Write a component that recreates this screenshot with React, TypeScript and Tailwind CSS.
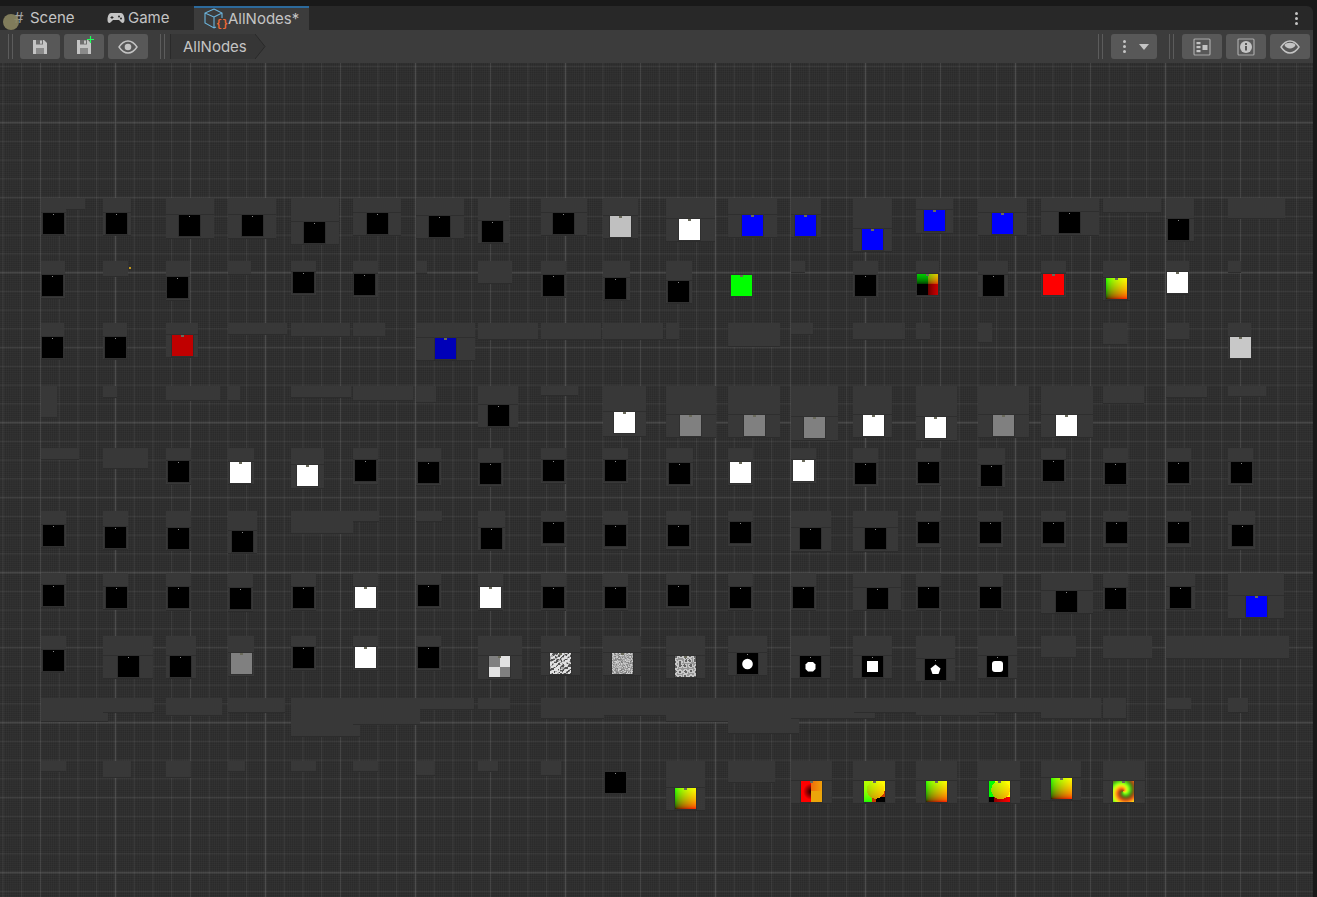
import React from "react";

type N = [number, number, number, number?, number?, string?];
const FONT = { fontFamily: "Inter, 'Liberation Sans', sans-serif" };

const rows: [number, N[]][] = [
  [198, [
    [41, 44, 11], [41, 25, 37, 43, 213, "#000"], [103, 28, 36, 106, 213, "#000"], [166, 48, 40, 179, 215, "#000"], [228, 48, 40, 242, 215, "#000"],
    [291, 48, 45, 304, 222, "#000"], [353, 48, 36, 367, 213, "#000"], [416, 48, 40, 429, 216, "#000"], [478, 31, 45, 482, 221, "#000"], [541, 46, 37, 553, 213, "#000"],
    [603, 35, 39, 610, 216, "#c0c0c0"], [666, 49, 42, 679, 219, "#fff"], [728, 49, 39, 742, 215, "#0000ff"], [791, 30, 39, 795, 215, "#0000ff"], [853, 39, 51, 862, 229, "#0000ff"],
    [916, 37, 35, 924, 210, "#0000ff"], [978, 49, 37, 992, 213, "#0000ff"], [1041, 58, 37, 1059, 212, "#000"], [1103, 58, 14], [1166, 28, 43, 1168, 219, "#000"], [1228, 57, 20],
  ]],
  [261, [
    [41, 24, 37, 42, 275, "#000"], [103, 25, 15], [166, 24, 39, 167, 277, "#000"], [228, 23, 13], [291, 25, 34, 293, 272, "#000"], [353, 25, 36, 354, 274, "#000"],
    [416, 11, 12], [478, 34, 22], [541, 25, 36, 543, 275, "#000"], [603, 27, 39, 605, 278, "#000"], [666, 26, 42, 668, 281, "#000"], [731, 21, 21, 731, 275, "#00ff00"],
    [791, 14, 11], [853, 25, 36, 855, 275, "#000"], [916, 23, 36, 917, 274, "quad"], [978, 30, 36, 983, 275, "#000"], [1041, 25, 36, 1043, 274, "#ff0000"],
    [1103, 27, 38, 1106, 278, "uv"], [1166, 23, 33, 1167, 272, "#fff"], [1228, 13, 11],
  ]],
  [323, [
    [41, 23, 36, 42, 337, "#000"], [103, 24, 36, 105, 337, "#000"], [166, 32, 33, 172, 335, "#c00000"], [228, 59, 11], [291, 59, 13], [353, 32, 13],
    [416, 59, 36, 435, 338, "#0000b8"], [478, 60, 16], [541, 60, 16], [603, 60, 16], [666, 13, 16], [728, 52, 23], [791, 22, 11], [853, 52, 16], [916, 14, 16],
    [978, 14, 19], [1103, 24, 21], [1166, 23, 16], [1228, 23, 36, 1230, 337, "#c8c8c8"],
  ]],
  [386, [
    [41, 16, 31], [103, 14, 11], [166, 54, 14], [228, 12, 14], [291, 60, 11], [353, 60, 14], [416, 20, 16], [478, 40, 41, 488, 405, "#000"], [541, 37, 9],
    [603, 43, 50, 614, 412, "#fff"], [666, 50, 51, 680, 415, "#808080"], [728, 52, 51, 744, 415, "#808080"], [791, 47, 54, 804, 417, "#808080"], [853, 39, 51, 863, 415, "#fff"],
    [916, 41, 54, 925, 417, "#fff"], [978, 51, 51, 993, 415, "#808080"], [1041, 52, 51, 1056, 415, "#fff"], [1103, 41, 17], [1166, 41, 11], [1228, 38, 10],
  ]],
  [448, [
    [41, 38, 11], [103, 45, 20], [166, 25, 36, 168, 461, "#000"], [228, 26, 36, 230, 462, "#fff"], [291, 33, 40, 297, 465, "#fff"], [353, 25, 36, 355, 460, "#000"],
    [416, 25, 37, 418, 462, "#000"], [478, 25, 38, 480, 463, "#000"], [541, 25, 35, 543, 460, "#000"], [603, 25, 35, 605, 460, "#000"], [666, 27, 38, 669, 463, "#000"],
    [728, 25, 37, 730, 462, "#fff"], [791, 25, 35, 793, 460, "#fff"], [853, 25, 38, 855, 463, "#000"], [916, 25, 37, 918, 462, "#000"], [978, 27, 39, 981, 465, "#000"],
    [1041, 25, 34, 1043, 460, "#000"], [1103, 25, 37, 1105, 463, "#000"], [1166, 25, 37, 1168, 462, "#000"], [1228, 25, 37, 1231, 462, "#000"],
  ]],
  [511, [
    [41, 25, 36, 43, 525, "#000"], [103, 25, 38, 105, 527, "#000"], [166, 25, 38, 168, 528, "#000"], [228, 29, 42, 232, 531, "#000"], [291, 62, 22], [353, 26, 10], [416, 26, 10],
    [478, 27, 39, 481, 528, "#000"], [541, 25, 35, 543, 522, "#000"], [603, 25, 38, 605, 525, "#000"], [666, 25, 38, 668, 525, "#000"], [728, 25, 35, 730, 522, "#000"],
    [791, 40, 40, 800, 528, "#000"], [853, 45, 40, 865, 528, "#000"], [916, 25, 36, 918, 522, "#000"], [978, 25, 36, 980, 522, "#000"], [1041, 25, 36, 1043, 522, "#000"],
    [1103, 25, 36, 1106, 522, "#000"], [1166, 25, 36, 1168, 522, "#000"], [1228, 27, 38, 1232, 525, "#000"],
  ]],
  [573, [
    [41, 25, 34, 43, 585, "#000"], [103, 25, 36, 106, 587, "#000"], [166, 25, 37, 168, 587, "#000"], [228, 25, 38, 230, 588, "#000"], [291, 25, 37, 293, 587, "#000"],
    [353, 25, 37, 355, 587, "#fff"], [416, 25, 35, 418, 585, "#000"], [478, 25, 37, 480, 587, "#fff"], [541, 25, 37, 543, 587, "#000"], [603, 25, 37, 605, 587, "#000"],
    [666, 25, 35, 668, 585, "#000"], [728, 25, 37, 730, 587, "#000"], [791, 25, 37, 793, 587, "#000"], [853, 48, 37, 867, 588, "#000"], [916, 25, 37, 918, 587, "#000"],
    [978, 25, 37, 980, 587, "#000"], [1041, 52, 39, 1056, 591, "#000"], [1103, 25, 37, 1105, 588, "#000"], [1166, 29, 36, 1170, 587, "#000"], [1228, 56, 45, 1246, 596, "#0000ff"],
  ]],
  [636, [
    [41, 25, 36, 43, 650, "#000"], [103, 50, 41, 118, 656, "#000"], [166, 30, 41, 170, 656, "#000"], [228, 26, 40, 231, 653, "#808080"], [291, 25, 34, 293, 647, "#000"],
    [353, 25, 34, 355, 647, "#fff"], [416, 25, 34, 418, 647, "#000"], [478, 44, 43, 489, 656, "checker"], [541, 39, 39, 550, 653, "n1"], [603, 38, 39, 612, 653, "n2"],
    [666, 39, 42, 675, 656, "n3"], [728, 39, 39, 737, 653, "circle"], [791, 39, 42, 800, 656, "oct"], [853, 39, 41, 862, 656, "square"], [916, 39, 45, 925, 659, "pent"],
    [978, 39, 42, 987, 656, "round"], [1041, 35, 21], [1103, 49, 22], [1166, 123, 22],
  ]],
  [698, [
    [41, 67, 23], [103, 51, 14], [166, 56, 17], [228, 57, 14], [291, 69, 38], [353, 67, 26], [420, 54, 11], [478, 32, 11],
    [541, 63, 20], [604, 62, 17], [666, 62, 23], [728, 71, 35], [791, 84, 20], [854, 62, 14], [916, 79, 17], [979, 62, 14], [1041, 60, 20], [1103, 23, 20], [1166, 25, 11], [1228, 20, 14],
  ]],
  [761, [
    [41, 25, 10], [103, 28, 16], [166, 25, 16], [228, 17, 10], [291, 25, 10], [353, 25, 10], [416, 19, 14], [478, 20, 10], [541, 20, 14],
    [605, 21, 21, 605, 772, "#000"], [666, 39, 49, 675, 788, "uv"], [728, 47, 21], [791, 41, 42, 801, 781, "split"], [853, 42, 42, 864, 781, "polar"],
    [916, 41, 41, 926, 781, "uv"], [978, 42, 42, 989, 781, "polar2"], [1041, 40, 39, 1051, 778, "uv"], [1103, 42, 42, 1113, 781, "swirl"],
  ]],
];

function rnd(x: number, y: number, s: number) {
  const v = Math.sin(x * 12.9898 + y * 78.233 + s) * 43758.5453;
  return v - Math.floor(v);
}
const clamp = (n: number) => Math.max(0, Math.min(255, Math.round(n)));
const gam = (c: number) => 255 * Math.pow(Math.max(0, Math.min(1, c)), 0.45);

function pixel(kind: string, x: number, y: number): [number, number, number] {
  const u = (x + 0.5) / 21;
  const v = (y + 0.5) / 21;
  const uvc = (a: number, b: number): [number, number, number] => [gam(a), gam(b), 0];
  switch (kind) {
    case "uv":
      return uvc(u, 1 - v);
    case "quad": {
      const r = u > 0.5 ? 0.1 + (u - 0.5) * 1.0 : 0;
      const g = v < 0.5 ? 0.6 * (1 - v * 2) : 0;
      return [gam(r * (v < 0.5 ? 1.3 : 1)), gam(g), 0];
    }
    case "split": {
      if (u < 0.5) {
        const d = Math.hypot(u - 0.5, v - 0.5);
        return [255 * Math.min(1, d * 2.4 + 0.05), 0, 0];
      }
      return v < 0.5 ? [240, 110 + 100 * (u - 0.5), 10] : [235, 165, 10];
    }
    case "polar": {
      const d = Math.hypot(u - 0.55, v - 0.42);
      if (d < 0.42) return uvc(0.25 + u * 0.8, 1 - v * 0.75);
      if (v > 0.78 && u > 0.55) return [0, 0, 0];
      if (u < 0.4) return [gam(0.5 * (1 - v)), 255, 0];
      return v < 0.5 ? [255, 250, 0] : [200, 60, 0];
    }
    case "polar2": {
      const d = Math.hypot(u - 0.55, v - 0.42);
      if (d < 0.44) return uvc(0.25 + u * 0.8, 1 - v * 0.7);
      if (v > 0.75) return u < 0.25 ? [0, 0, 0] : [gam(u), 0, 0];
      if (u < 0.3) return [0, 255, 0];
      return [255, 255, 0];
    }
    case "swirl": {
      const dx = u - 0.5;
      const dy = v - 0.5;
      const d = Math.hypot(dx, dy);
      const a = Math.atan2(dy, dx) + d * 9;
      return [170 + 85 * Math.cos(a), 170 + 85 * Math.sin(a), 20];
    }
    case "n1": {
      const n = rnd(x >> 1, y >> 1, 2) * 0.6 + rnd(x, y, 7) * 0.4 + 0.25 * Math.sin(x + y * 1.4);
      const c = n > 0.55 ? 225 : n > 0.35 ? 170 : 80;
      return [c, c, c];
    }
    case "n2": {
      const c = 120 + 95 * rnd(x, y, 5);
      return [c, c, c];
    }
    case "n3": {
      const cx = Math.round(x / 5);
      const cy = Math.round(y / 5);
      const d = Math.hypot(x - cx * 5 + (rnd(cx, cy, 1) - 0.5) * 2, y - cy * 5 + (rnd(cx, cy, 3) - 0.5) * 2);
      const c = d < 1.3 ? 100 : d < 2.6 ? 200 : 150;
      return [c, c, c];
    }
    default:
      return [0, 0, 0];
  }
}

function Pixels({ kind }: { kind: string }) {
  const cells: React.ReactNode[] = [];
  for (let y = 0; y < 21; y++) {
    for (let x = 0; x < 21; x++) {
      const [r, g, b] = pixel(kind, x, y);
      cells.push(<rect key={x + "-" + y} x={x} y={y} width={1} height={1} fill={`rgb(${clamp(r)},${clamp(g)},${clamp(b)})`} />);
    }
  }
  return (
    <svg width={21} height={21} viewBox="0 0 21 21" shapeRendering="crispEdges" className="block">
      {cells}
    </svg>
  );
}

function Art({ kind }: { kind: string }) {
  if (kind === "checker") {
    return (
      <svg width={21} height={21} viewBox="0 0 21 21" className="block" shapeRendering="crispEdges">
        <rect width={21} height={21} fill="#808080" />
        <rect x={10.5} width={10.5} height={10.5} fill="#e2e2e2" />
        <rect y={10.5} width={10.5} height={10.5} fill="#e2e2e2" />
      </svg>
    );
  }
  if (["circle", "oct", "square", "pent", "round"].includes(kind)) {
    return (
      <svg width={21} height={21} viewBox="0 0 21 21" className="block">
        <rect width={21} height={21} fill="#000" />
        {kind === "circle" && <circle cx={10.5} cy={11} r={5.3} fill="#fff" />}
        {kind === "oct" && <polygon points="8,6 13,6 15.5,8.5 15.5,13 13,15.5 8,15.5 5.5,13 5.5,8.5" fill="#fff" />}
        {kind === "square" && <rect x={5} y={5} width={11} height={11} fill="#fff" />}
        {kind === "pent" && <polygon points="10.5,5.5 15.5,9.5 13.5,15 7.5,15 5.5,9.5" fill="#fff" />}
        {kind === "round" && <rect x={5} y={5} width={11} height={11} rx={3} fill="#fff" />}
      </svg>
    );
  }
  return <Pixels kind={kind} />;
}

function Preview({ kind, x, y }: { kind: string; x: number; y: number }) {
  const solid = kind.startsWith("#");
  const dark = kind === "#000" || kind === "circle" || kind === "oct" || kind === "square" || kind === "pent" || kind === "round";
  return (
    <div className="absolute h-[21px] w-[21px] outline outline-1 outline-[#303030]" style={{ left: x, top: y, background: solid ? kind : undefined }}>
      {!solid && <Art kind={kind} />}
      <div className={dark ? "absolute left-[10px] top-[1px] h-px w-px bg-[#8a8a8a]" : "absolute left-[9px] top-0 h-[2px] w-[3px] bg-[#6a6a5a]"} />
    </div>
  );
}

function Node({ n, rowY }: { n: N; rowY: number }) {
  const [x, w, h, px, py, kind] = n;
  if (px !== undefined && py !== undefined && kind && (kind === "#00ff00" || (kind === "#000" && x === 605))) {
    return <Preview kind={kind} x={px - x} y={py - rowY} />;
  }
  const height = px !== undefined && py !== undefined ? Math.max(h, py + 22 - rowY) : h;
  return (
    <div className="absolute bg-[#383838] shadow-[0_1px_0_#2c2c2c]" style={{ left: 0, top: 0, width: w, height }}>
      {py !== undefined && <div className="absolute inset-x-0 h-px bg-[#2e2e2e]" style={{ top: py - rowY - 1 }} />}
      {px !== undefined && py !== undefined && kind && <Preview kind={kind} x={px - x} y={py - rowY} />}
    </div>
  );
}

function Grid() {
  const W = 1317;
  const H = 834;
  const v = (start: number, step: number) => {
    let d = "";
    for (let x = start % step; x < W; x += step) d += `M${x} 0V${H}`;
    return d;
  };
  const hz = (start: number, step: number) => {
    let d = "";
    for (let y = ((start - 63) % step + step) % step; y < H; y += step) d += `M0 ${y}H${W}`;
    return d;
  };
  return (
    <svg className="absolute inset-0" width={W} height={H}>
      <path d={v(0.9, 1.875) + hz(63.9, 1.875)} stroke="#fff" strokeOpacity={0.032} strokeWidth={0.94} fill="none" />
      <path d={v(115.5, 18.75) + hz(122.7, 18.75)} stroke="#fff" strokeOpacity={0.07} strokeWidth={1} fill="none" />
      <path d={v(40.5, 75) + hz(47.7 + 150, 75)} stroke="#fff" strokeOpacity={0.03} strokeWidth={2.2} fill="none" />
      <path d={v(115.5, 150) + hz(122.7, 150)} stroke="#fff" strokeOpacity={0.04} strokeWidth={2.4} fill="none" />
    </svg>
  );
}

function Floppy({ plus }: { plus?: boolean }) {
  return (
    <div className="relative">
      <svg width={18} height={18} viewBox="0 0 18 18" className="block">
        <path d="M2 2h11l3 3v11H2z" fill="#c4c4c4" />
        <rect x={5} y={2} width={7} height={4.5} fill="#6e6e6e" />
        <rect x={9} y={2.5} width={2} height={3.2} fill="#c4c4c4" />
        <rect x={5} y={10} width={8} height={6} fill="#8a8a8a" />
      </svg>
      {plus && (
        <svg width={9} height={9} viewBox="0 0 9 9" className="absolute left-[11px] top-[-3px]">
          <path d="M4.500 1v7M1 4.500h7" stroke="#1fff5a" strokeWidth={1.2} />
        </svg>
      )}
    </div>
  );
}

function Eye({ filled }: { filled?: boolean }) {
  return (
    <svg width={20} height={14} viewBox="0 0 20 14">
      <path d="M1 7C4 2.500 7 1 10 1s6 1.500 9 6c-3 4.500-6 6-9 6S4 11.500 1 7z" fill="none" stroke="#c4c4c4" strokeWidth={1.4} />
      {filled ? <path d="M4.500 5C6 2 14 2 15.500 5 14 9.500 6 9.500 4.500 5z" fill="#c4c4c4" /> : <circle cx={10} cy={7} r={3.3} fill="#c4c4c4" />}
    </svg>
  );
}

function Btn({ children, className = "w-10" }: { children: React.ReactNode; className?: string }) {
  return <div className={`flex h-[25px] items-center justify-center rounded-[3px] bg-[#585858] ${className}`}>{children}</div>;
}

function Sep() {
  return (
    <div className="flex h-[25px] gap-[3px]">
      <div className="w-px bg-[#5c5c5c]" />
      <div className="w-px bg-[#5c5c5c]" />
    </div>
  );
}

export default function App() {
  return (
    <div className="relative flex h-[897px] w-[1317px] flex-col overflow-hidden bg-[#191919] pt-[6px] pr-1 text-[#c4c4c4]" style={FONT}>
      <div className="relative flex h-6 items-stretch rounded-tr-md bg-[#282828] text-[15px]">
        <div className="flex w-[96px] items-center pl-[14px]">
          <span className="w-4 text-[#a0a0a0]">#</span>
          <span>Scene</span>
        </div>
        <div className="flex w-[98px] items-center gap-[3px] pl-[11px]">
          <svg width={18} height={12} viewBox="0 0 18 12">
            <path d="M4 1h10c2 0 3.500 3 3.500 7 0 3-2 4-3.500 2l-2-2H6l-2 2C2.500 12 .5 11 .5 8 .5 4 2 1 4 1z" fill="#c4c4c4" />
            <path d="M3.500 5.500h3M5 4v3" stroke="#282828" strokeWidth={1} />
            <circle cx={12} cy={4.500} r={1} fill="#282828" />
            <circle cx={14} cy={6.500} r={1} fill="#282828" />
          </svg>
          <span>Game</span>
        </div>
        <div className="flex w-[115px] items-center border-t-2 border-[#2c6a9c] bg-[#3c3c3c] pl-[9px]">
          <svg width={25} height={24} viewBox="0 0 25 24" className="shrink-0">
            <path d="M11 2l8 4v5M11 2L2 6v10l9 5 2-1M2 6l9 4v11M11 10l8-4" fill="none" stroke="#6bb4dc" strokeWidth={1.1} />
            <text x={13} y={19.500} fontSize={10} fontWeight={700} fill="#ee6a35" fontFamily="'Liberation Mono', monospace">{"{}"}</text>
          </svg>
          <span>AllNodes*</span>
        </div>
        <div className="absolute right-[15px] top-[6px] flex flex-col gap-[2px]">
          <div className="h-[3px] w-[3px] rounded-full bg-[#c4c4c4]" />
          <div className="h-[3px] w-[3px] rounded-full bg-[#c4c4c4]" />
          <div className="h-[3px] w-[3px] rounded-full bg-[#c4c4c4]" />
        </div>
      </div>

      <div className="flex h-[33px] items-center bg-[#3c3c3c] pl-2 pr-[3px]">
        <Sep />
        <div className="ml-[7px] flex gap-1">
          <Btn><Floppy /></Btn>
          <Btn><Floppy plus /></Btn>
          <Btn><Eye /></Btn>
        </div>
        <div className="ml-3"><Sep /></div>
        <div className="relative ml-[5px] flex h-[25px] w-[85px] items-center border-l border-[#2a2a2a] bg-[#363636] pl-[12px] pt-[2px] text-[15px]">
          AllNodes
          <svg width={11} height={25} viewBox="0 0 11 25" className="absolute left-[84px] top-0">
            <path d="M0 0l10 12.500L0 25z" fill="#363636" />
            <path d="M0 0l10 12.500L0 25" fill="none" stroke="#2a2a2a" strokeWidth={1} />
          </svg>
        </div>
        <div className="flex-1" />
        <Sep />
        <div className="ml-2 flex h-[25px] w-[46px] items-center gap-[13px] rounded-[3px] bg-[#585858] pl-3">
          <div className="flex flex-col gap-[2px]">
            <div className="h-[3px] w-[3px] rounded-full bg-[#c4c4c4]" />
            <div className="h-[3px] w-[3px] rounded-full bg-[#c4c4c4]" />
            <div className="h-[3px] w-[3px] rounded-full bg-[#c4c4c4]" />
          </div>
          <div className="h-0 w-0 border-x-[5px] border-t-[6px] border-x-transparent border-t-[#c4c4c4]" />
        </div>
        <div className="ml-3"><Sep /></div>
        <div className="ml-2 flex gap-1">
          <Btn>
            <svg width={18} height={18} viewBox="0 0 18 18">
              <rect x={1} y={1} width={16} height={16} rx={1} fill="none" stroke="#a8a8a8" strokeWidth={1.2} />
              <rect x={3.500} y={4} width={4} height={2.200} fill="#c4c4c4" />
              <rect x={3.500} y={8} width={4} height={2.200} fill="#c4c4c4" />
              <rect x={3.500} y={12} width={4} height={2.200} fill="#c4c4c4" />
              <rect x={9.500} y={7} width={5} height={5} fill="#c4c4c4" />
            </svg>
          </Btn>
          <Btn>
            <svg width={18} height={18} viewBox="0 0 18 18">
              <rect x={1} y={1} width={16} height={16} rx={1} fill="none" stroke="#a8a8a8" strokeWidth={1.2} />
              <circle cx={9} cy={9} r={6} fill="#c4c4c4" />
              <rect x={8} y={8} width={2} height={4.500} fill="#585858" />
              <rect x={8} y={5} width={2} height={2} fill="#585858" />
            </svg>
          </Btn>
          <Btn><Eye filled /></Btn>
        </div>
      </div>

      <div className="relative flex-1 overflow-hidden bg-[#2a2a2a]">
        <Grid />
        {rows.map(([y, nodes]) =>
          nodes.map((n, i) => (
            <div key={y + "-" + i} className="absolute" style={{ left: n[0], top: y - 63 }}>
              <Node n={n} rowY={y} />
            </div>
          ))
        )}
        <div className="absolute left-[129px] top-[204px] h-[2px] w-[2px] bg-[#c79a1a]" />
      </div>

      <div className="absolute left-[3px] top-[14px] h-4 w-4 rounded-full bg-[#8a8560]/90" />
    </div>
  );
}
